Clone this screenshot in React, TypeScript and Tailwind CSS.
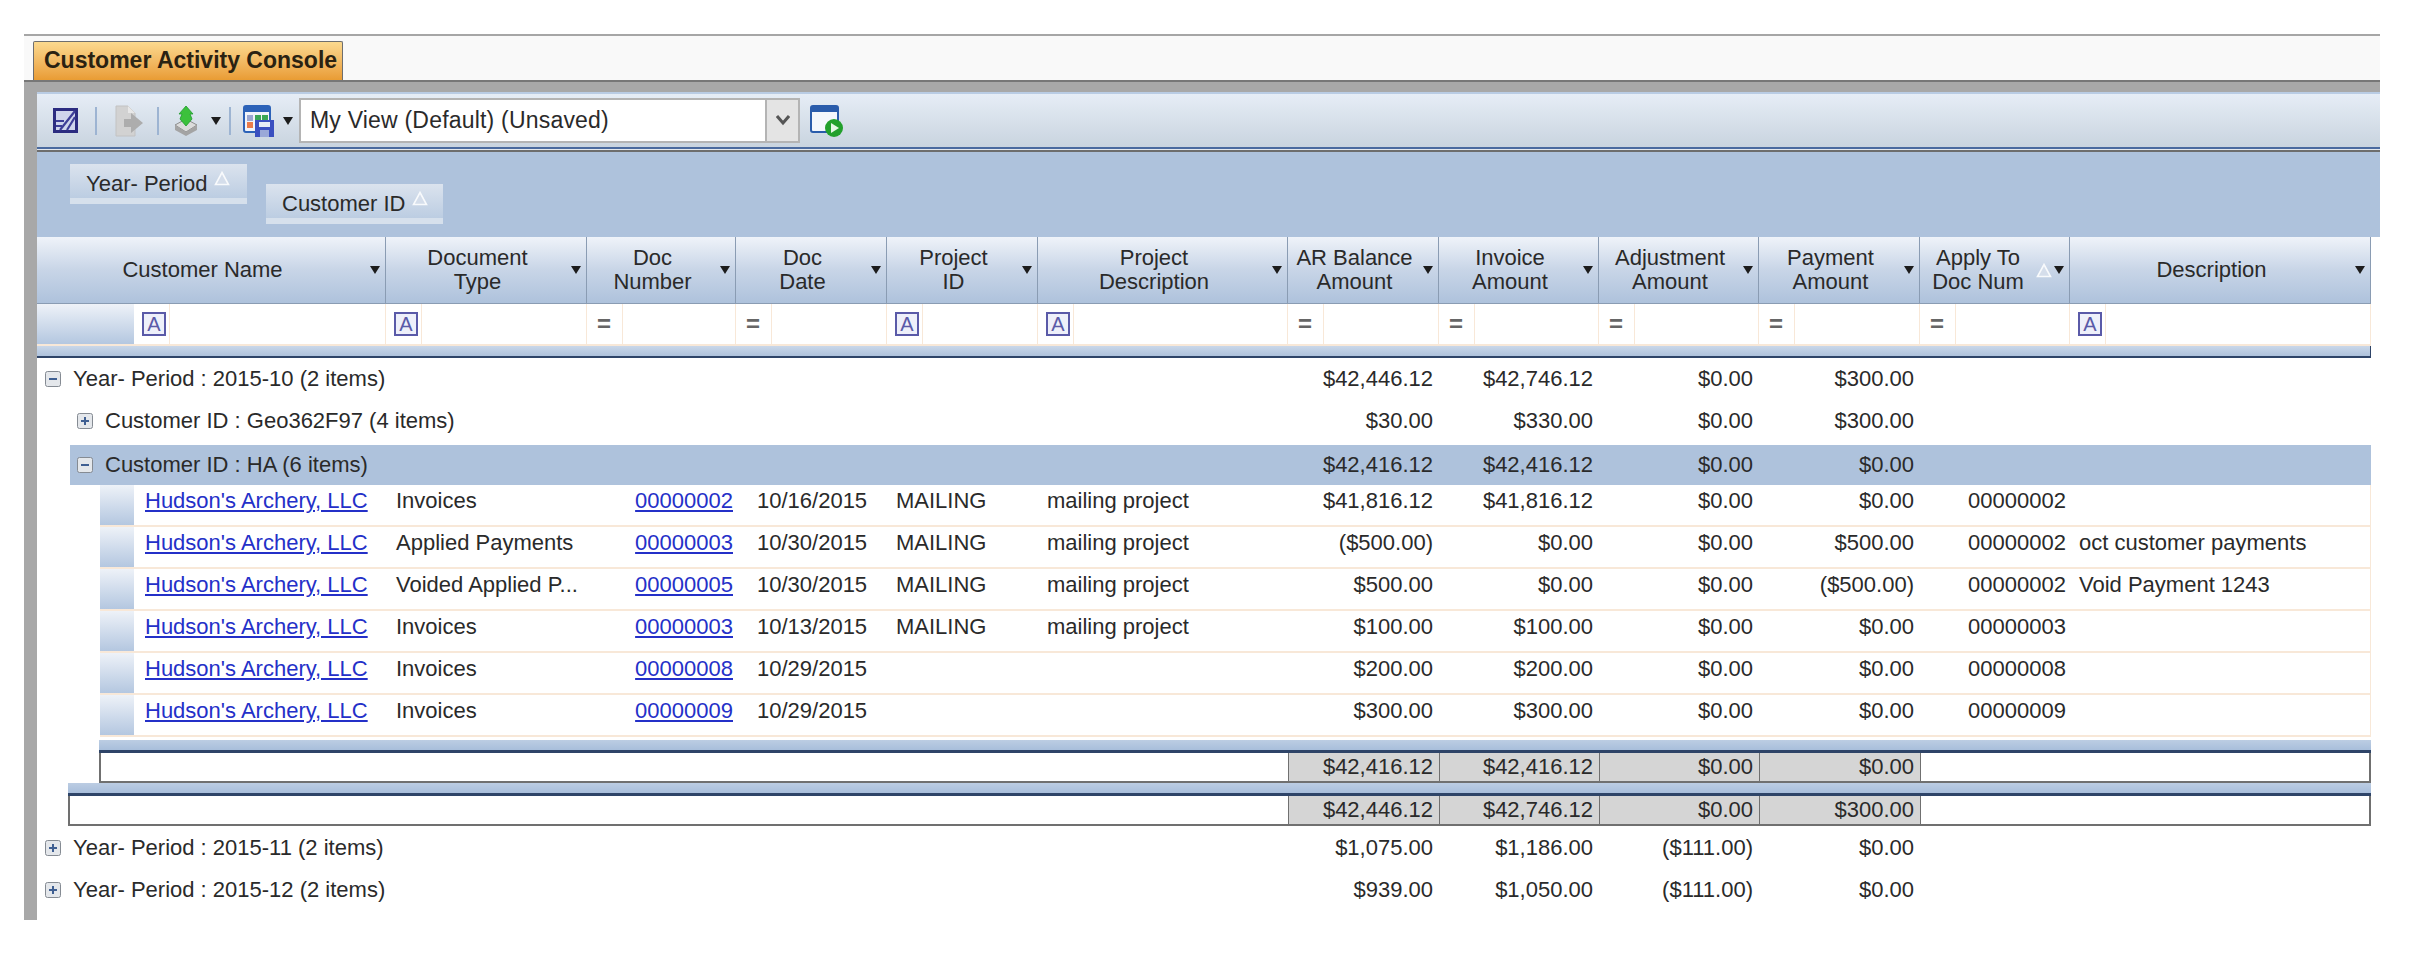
const font = "font-['Liberation_Sans',Arial,sans-serif]"

const amountCols = ['w-[151px]', 'w-[160px]', 'w-[160px]', 'w-[161px]']

const headers = [
    { lines: ['Customer Name'], width: 'w-[349px]', op: 'A' },
    { lines: ['Document', 'Type'], width: 'w-[201px]', op: 'A' },
    { lines: ['Doc', 'Number'], width: 'w-[149px]', op: '=' },
    { lines: ['Doc', 'Date'], width: 'w-[151px]', op: '=' },
    { lines: ['Project', 'ID'], width: 'w-[151px]', op: 'A' },
    { lines: ['Project', 'Description'], width: 'w-[250px]', op: 'A' },
    { lines: ['AR Balance', 'Amount'], width: 'w-[151px]', op: '=' },
    { lines: ['Invoice', 'Amount'], width: 'w-[160px]', op: '=' },
    { lines: ['Adjustment', 'Amount'], width: 'w-[160px]', op: '=' },
    { lines: ['Payment', 'Amount'], width: 'w-[161px]', op: '=' },
    { lines: ['Apply To', 'Doc Num'], width: 'w-[150px]', op: '=', sorted: true },
    { lines: ['Description'], width: 'w-[301px]', op: 'A' },
]

const rows = [
    ['Invoices', '00000002', '10/16/2015', 'MAILING', 'mailing project', '$41,816.12', '$41,816.12', '$0.00', '$0.00', '00000002', ''],
    ['Applied Payments', '00000003', '10/30/2015', 'MAILING', 'mailing project', '($500.00)', '$0.00', '$0.00', '$500.00', '00000002', 'oct customer payments'],
    ['Voided Applied P...', '00000005', '10/30/2015', 'MAILING', 'mailing project', '$500.00', '$0.00', '$0.00', '($500.00)', '00000002', 'Void Payment 1243'],
    ['Invoices', '00000003', '10/13/2015', 'MAILING', 'mailing project', '$100.00', '$100.00', '$0.00', '$0.00', '00000003', ''],
    ['Invoices', '00000008', '10/29/2015', '', '', '$200.00', '$200.00', '$0.00', '$0.00', '00000008', ''],
    ['Invoices', '00000009', '10/29/2015', '', '', '$300.00', '$300.00', '$0.00', '$0.00', '00000009', ''],
]

function Expander({ open }: { open?: boolean }) {
    return (
        <svg width="16" height="16" viewBox="0 0 16 16" className="shrink-0">
            <rect x="0.5" y="0.5" width="15" height="15" rx="2" fill="#e4e7eb" stroke="#858b93" />
            <rect x="4" y="7" width="8" height="2" fill="#3f5f92" />
            {!open && <rect x="7" y="4" width="2" height="8" fill="#3f5f92" />}
        </svg>
    )
}

function Caret() {
    return (
        <svg width="10" height="8" viewBox="0 0 10 8" className="shrink-0">
            <path d="M0 0h10L5 8z" fill="#1c1c1c" />
        </svg>
    )
}

function SortTriangle() {
    return (
        <svg width="16" height="15" viewBox="0 0 16 15" className="shrink-0">
            <path d="M8 1.5 14.5 13.5h-13z" fill="#d5deeb" stroke="#f8fafc" strokeWidth="1.6" />
        </svg>
    )
}

function Amounts({ values }: { values: string[] }) {
    return (
        <>
            {values.map((v, i) => (
                <div key={i} className={`${amountCols[i]} shrink-0 pr-1.5 text-right`}>{v}</div>
            ))}
        </>
    )
}

function Toolbar() {
    return (
        <div className="h-[60px] shrink-0">
            <div className="flex h-[55px] items-center border-t-2 border-[#b9cce4] bg-linear-to-b from-[#e6edf6] to-[#c9d4df] pl-4">
                <svg width="25" height="25" viewBox="0 0 25 25" className="shrink-0">
                    <rect x="1.5" y="1.5" width="22" height="22" fill="#cfd5ec" stroke="#2c2c80" strokeWidth="3" />
                    <path d="M3 13h8M3 18h6M22 3 7 22M22 9 14 22" stroke="#3e3e98" strokeWidth="2.2" fill="none" />
                </svg>
                <div className="ml-[17px] h-[28px] w-[2px] bg-[#9db4d2]" />
                <svg width="31" height="32" viewBox="0 0 31 32" className="ml-4 shrink-0">
                    <path d="M3 1h12l7 7v23H3z" fill="#d2d2d2" stroke="#c2c2c2" />
                    <path d="M15 1v7h7z" fill="#e8e8e8" />
                    <path d="M11 14h7V8l12 10-12 10v-6h-7z" fill="#adadad" />
                </svg>
                <div className="ml-[13px] h-[28px] w-[2px] bg-[#9db4d2]" />
                <svg width="24" height="30" viewBox="0 0 24 30" className="ml-[15px] shrink-0">
                    <path d="M1 19l11-6 11 6-11 7z" fill="#dcdcdc" stroke="#8d8d8d" />
                    <path d="M1 19v5l11 6 11-6v-5l-11 7z" fill="#a4a4a4" />
                    <path d="M12 0l7 8h-3l2 5-6 7-6-7 2-5H5z" fill="#3cc13c" stroke="#1f9a2d" strokeWidth="0.8" />
                </svg>
                <div className="ml-[13px]"><Caret /></div>
                <div className="ml-[8px] h-[28px] w-[2px] bg-[#9db4d2]" />
                <svg width="32" height="32" viewBox="0 0 32 32" className="ml-3 shrink-0">
                    <rect x="1" y="1" width="26" height="26" rx="2" fill="#f1f4fa" stroke="#2c62b8" strokeWidth="2" />
                    <rect x="1" y="1" width="26" height="6" fill="#2c62b8" />
                    <rect x="4" y="10" width="6" height="6" fill="#9aa6d0" />
                    <rect x="4" y="17" width="6" height="6" fill="#ea7b4c" />
                    <rect x="12" y="10" width="6" height="6" fill="#3aa655" />
                    <rect x="19" y="10" width="6" height="6" fill="#3aa655" />
                    <path d="M12 15h19v17H12z" fill="#3a4fc0" />
                    <rect x="16" y="17" width="11" height="5" fill="#e6ebf5" />
                    <rect x="17" y="25" width="9" height="7" fill="#9aa8d8" />
                </svg>
                <div className="ml-2"><Caret /></div>
                <div className="ml-1.5 flex h-[45px] w-[501px] shrink-0 border-2 border-[#b4b4b4] bg-white">
                    <div className="flex-1 pl-[9px] text-[23px] leading-[41px] tracking-[0.2px] text-[#2a2a2a]">My View (Default) (Unsaved)</div>
                    <div className="flex w-[33px] items-center justify-center border-l-2 border-[#b4b4b4] bg-[#e4e4e4]">
                        <svg width="14" height="11" viewBox="0 0 14 11">
                            <path d="M1 1l6 7 6-7" fill="none" stroke="#555" strokeWidth="3" />
                        </svg>
                    </div>
                </div>
                <svg width="33" height="32" viewBox="0 0 33 32" className="ml-2.5 shrink-0">
                    <rect x="1" y="1" width="27" height="26" rx="2" fill="#f4f7fc" stroke="#2a5cab" strokeWidth="2" />
                    <rect x="1" y="1" width="27" height="6" rx="1" fill="#2a5cab" />
                    <circle cx="24" cy="23" r="9" fill="#22a02c" />
                    <path d="M21 18l8 5-8 5z" fill="#e6f7e6" />
                </svg>
            </div>
            <div className="h-[2px] bg-[#4a6a9f]" />
            <div className="h-px bg-[#e3e8ee]" />
            <div className="h-[2px] bg-[#6d6d6d]" />
        </div>
    )
}

function GroupChip({ label, className }: { label: string; className: string }) {
    return (
        <div className={`flex h-10 w-[177px] items-start border-b-[6px] border-[#d6e0ec] bg-linear-to-b from-[#dbe3ee] to-[#bccde2] pl-4 pt-[7px] text-[22px] leading-[26px] text-[#2a2a2a] ${className}`}>
            <span className="whitespace-nowrap">{label}</span>
            <span className="ml-[7px] shrink-0"><SortTriangle /></span>
        </div>
    )
}

function HeaderRow() {
    return (
        <div className="flex h-[67px] w-[2334px]">
            {headers.map((h) => (
                <div key={h.lines[0]} className={`${h.width} flex shrink-0 items-center border-r border-b border-[#8a9cb3] bg-linear-to-b from-[#eff3f9] via-[#c8d5e7] to-[#aec2dc] pr-[5px]`}>
                    <div className="flex-1 text-center text-[22px] leading-[24px] text-[#2a2a2a]">
                        {h.lines.map((l) => <div key={l}>{l}</div>)}
                    </div>
                    {h.sorted && <SortTriangle />}
                    <span className="ml-[2px]"><Caret /></span>
                </div>
            ))}
        </div>
    )
}

function FilterRow() {
    return (
        <div className="flex h-[42px] w-[2334px] bg-white">
            {headers.map((h, i) => (
                <div key={h.lines[0]} className={`${h.width} flex shrink-0 border-r border-b-2 border-[#f8e8d8]`}>
                    {i === 0 && <div className="w-[97px] shrink-0 bg-linear-to-b from-[#eef2f8] to-[#b4c7e0]" />}
                    <div className="flex w-9 shrink-0 items-center border-r border-[#f8e8d8] pl-2">
                        {h.op === 'A' ? (
                            <div className="flex h-6 w-6 items-center justify-center border-2 border-[#5a5aa8] bg-[#eef0fa] text-[20px] leading-none text-[#5a5aa8]">A</div>
                        ) : (
                            <div className="pl-[2px] text-[24px] font-bold leading-none text-[#666]">=</div>
                        )}
                    </div>
                </div>
            ))}
        </div>
    )
}

function DataRow({ row }: { row: string[] }) {
    return (
        <div className="ml-[63px] flex h-[42px] w-[2271px] border-b-2 border-r border-[#f8e8d8] text-[22px] leading-[24px] text-[#2a2a2a]">
            <div className="flex w-[286px] shrink-0">
                <div className="w-[34px] shrink-0 bg-linear-to-b from-[#eef2f8] to-[#b4c7e0]" />
                <a className="pl-[11px] pt-[4px] text-[#2430c8] underline" href="#">Hudson&apos;s Archery, LLC</a>
            </div>
            <div className="w-[201px] shrink-0 whitespace-nowrap pl-2.5 pt-[4px]">{row[0]}</div>
            <div className="w-[149px] shrink-0 pr-[3px] pt-[4px] text-right text-[#2430c8] underline">{row[1]}</div>
            <div className="w-[151px] shrink-0 pl-[21px] pt-[4px]">{row[2]}</div>
            <div className="w-[151px] shrink-0 pl-[9px] pt-[4px]">{row[3]}</div>
            <div className="w-[250px] shrink-0 pl-[9px] pt-[4px]">{row[4]}</div>
            <div className="flex pt-[4px]"><Amounts values={row.slice(5, 9)} /></div>
            <div className="w-[150px] shrink-0 pl-12 pt-[4px]">{row[9]}</div>
            <div className="whitespace-nowrap pl-[9px] pt-[4px]">{row[10]}</div>
        </div>
    )
}

function Summary({ values, className, spacer }: { values: string[]; className: string; spacer: string }) {
    return (
        <div className={className}>
            <div className="h-[10px] bg-linear-to-b from-[#bccde3] to-[#a8bedb]" />
            <div className="h-[3px] bg-[#2e4468]" />
            <div className="flex h-[30px] border-x-2 border-b-2 border-[#707070] bg-white text-[22px] leading-[28px] text-[#2a2a2a]">
                <div className={`${spacer} shrink-0`} />
                {values.map((v, i) => (
                    <div key={i} className={`${amountCols[i]} shrink-0 border-l border-[#707070] bg-[#d5d5d5] pr-1.5 text-right`}>{v}</div>
                ))}
                <div className="flex-1 border-l border-[#707070]" />
            </div>
        </div>
    )
}

function GroupRow({ label, values, open, indent, band }: { label: string; values: string[]; open?: boolean; indent?: boolean; band?: boolean }) {
    const spacer = indent ? 'w-[1218px] pl-[7px]' : 'w-[1251px] pl-2'
    const height = band ? 'mt-[3px] h-[40px] bg-[#aec2dc]' : 'h-[42px]'
    return (
        <div className={`${indent ? 'ml-[33px] w-[2301px]' : 'w-[2334px]'} ${height} flex items-center text-[22px] leading-[24px] text-[#2a2a2a]`}>
            <div className={`${spacer} flex shrink-0 items-center gap-3`}>
                <Expander open={open} />
                <span>{label}</span>
            </div>
            <Amounts values={values} />
        </div>
    )
}

export default function App() {
    return (
        <div className={`${font} h-[960px] w-[2436px] overflow-hidden bg-white pl-6 pt-[34px]`}>
            <div className="w-[2356px]">
                <div className="h-[2px] bg-[#a6a6a6]" />
                <div className="flex h-[44px] items-end bg-[#f9f9f9] pl-[9px]">
                    <div className="h-[39px] w-[310px] rounded-t-[2px] border-x border-t border-[#6e6e6e] bg-linear-to-b from-[#fbd98e] to-[#e99c33] pl-2.5 text-[23px] font-bold leading-[36px] text-[#2a2212]">
                        Customer Activity Console
                    </div>
                </div>
                <div className="h-3 border-t-2 border-[#777] bg-[#a8a8a8]" />
                <div className="h-[828px] border-l-[13px] border-[#a8a8a8]">
                    <Toolbar />
                    <div className="flex h-[85px] items-start gap-[19px] bg-[#aec2dc] pl-[33px] pt-3">
                        <GroupChip label="Year- Period" className="" />
                        <GroupChip label="Customer ID" className="mt-5" />
                    </div>
                    <HeaderRow />
                    <FilterRow />
                    <div className="h-[12px] w-[2334px] border-b-2 border-r border-[#2e4468] bg-linear-to-b from-[#c9d7e9] to-[#aec2dc]" />
                    <GroupRow label="Year- Period : 2015-10 (2 items)" values={['$42,446.12', '$42,746.12', '$0.00', '$300.00']} open />
                    <GroupRow indent label="Customer ID : Geo362F97 (4 items)" values={['$30.00', '$330.00', '$0.00', '$300.00']} />
                    <GroupRow indent band open label="Customer ID : HA (6 items)" values={['$42,416.12', '$42,416.12', '$0.00', '$0.00']} />
                    {rows.map((r, i) => <DataRow key={i} row={r} />)}
                    <Summary className="ml-[62px] mt-[3px] w-[2272px]" spacer="w-[1187px]" values={['$42,416.12', '$42,416.12', '$0.00', '$0.00']} />
                    <Summary className="ml-[31px] w-[2303px]" spacer="w-[1218px]" values={['$42,446.12', '$42,746.12', '$0.00', '$300.00']} />
                    <div className="h-px" />
                    <GroupRow label="Year- Period : 2015-11 (2 items)" values={['$1,075.00', '$1,186.00', '($111.00)', '$0.00']} />
                    <GroupRow label="Year- Period : 2015-12 (2 items)" values={['$939.00', '$1,050.00', '($111.00)', '$0.00']} />
                </div>
            </div>
        </div>
    )
}
